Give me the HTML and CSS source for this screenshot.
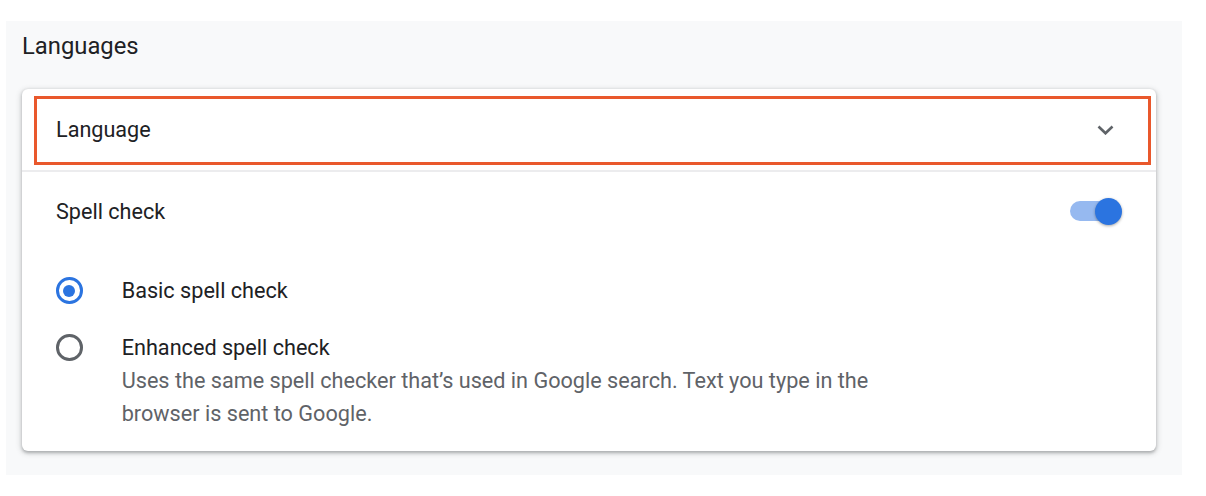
FILE: index.html
```html
<!DOCTYPE html>
<html lang="en">
<head>
<meta charset="utf-8">
<title>Languages</title>
<link rel="stylesheet" href="styles.css">
</head>
<body>
<section class="panel">
  <h2 class="panel-title">Languages</h2>
  <div class="card">
    <div class="row row-language">
      <span class="row-label">Language</span>
      <svg class="chevron" width="17" height="10" viewBox="0 0 17 10" aria-hidden="true">
        <path d="M1.5 1.5 L8.5 8.3 L15.5 1.5" fill="none" stroke="#5f6368" stroke-width="2.6"/>
      </svg>
    </div>
    <div class="row row-spell">
      <span class="row-label">Spell check</span>
      <span class="toggle toggle-on" role="switch" aria-checked="true">
        <span class="toggle-track"></span>
        <span class="toggle-knob"></span>
      </span>
    </div>
    <div class="radio-group">
      <div class="radio-row radio-row-basic">
        <span class="radio radio-checked"><span class="radio-dot"></span></span>
        <span class="radio-text">
          <span class="radio-label">Basic spell check</span>
        </span>
      </div>
      <div class="radio-row radio-row-enhanced">
        <span class="radio"></span>
        <span class="radio-text">
          <span class="radio-label">Enhanced spell check</span>
          <span class="radio-desc">Uses the same spell checker that’s used in Google search. Text you type in the browser is sent to Google.</span>
        </span>
      </div>
    </div>
  </div>
</section>
</body>
</html>
```
FILE: styles.css
```css
html, body {
  margin: 0;
  padding: 0;
  background: #ffffff;
}

body {
  font-family: Roboto, "Liberation Sans", Arial, sans-serif;
  color: #202124;
}

.panel {
  margin: 21px 0 0 6px;
  width: 1176px;
  box-sizing: border-box;
  background: #f8f9fa;
  padding: 9px 26px 24px 16px;
}

.panel-title {
  margin: 0;
  font-size: 23.8px;
  font-weight: 400;
  line-height: 33px;
  color: #202124;
}

.card {
  margin-top: 26px;
  background: #ffffff;
  border-radius: 6px;
  box-shadow: 0 1.5px 3px 0 rgba(60, 64, 67, 0.3), 0 1.5px 5px 1.5px rgba(60, 64, 67, 0.15);
}

.row {
  display: flex;
  align-items: center;
  justify-content: space-between;
  font-size: 21.6px;
  line-height: 33px;
}

.row-language {
  position: relative;
  height: 81px;
  padding: 0 42px 0 34px;
}

.row-language::after {
  content: "";
  position: absolute;
  left: 12px;
  top: 7px;
  right: 5px;
  bottom: 5px;
  border: 3px solid #e9582c;
  pointer-events: none;
}

.chevron {
  display: block;
}

.row-spell {
  height: 78px;
  padding: 0 34px;
  border-top: 2px solid #ececee;
}

.toggle {
  position: relative;
  display: block;
  width: 52px;
  height: 27px;
}

.toggle-track {
  position: absolute;
  left: 0;
  top: 3.6px;
  width: 46px;
  height: 19.8px;
  border-radius: 10px;
  background: #96b9f0;
}

.toggle-knob {
  position: absolute;
  right: 0;
  top: 0;
  width: 27px;
  height: 27px;
  border-radius: 50%;
  background: #2b74e0;
  box-shadow: 0 1px 3px rgba(0, 0, 0, 0.35);
}

.radio-group {
  padding: 12px 34px 21px 34px;
  font-size: 21.65px;
  line-height: 33px;
}

.radio-row {
  display: flex;
  gap: 39px;
}

.radio-row-basic {
  align-items: center;
  min-height: 57px;
}

.radio-row-enhanced {
  align-items: flex-start;
  padding-top: 12px;
}

.radio {
  flex: none;
  box-sizing: border-box;
  width: 26.7px;
  height: 26.7px;
  border-radius: 50%;
  border: 3.3px solid #5f6368;
  display: flex;
  align-items: center;
  justify-content: center;
}

.radio-row-enhanced .radio {
  margin-top: 3.2px;
}

.radio-checked {
  border-color: #2b74e0;
}

.radio-dot {
  width: 12px;
  height: 12px;
  border-radius: 50%;
  background: #2b74e0;
}

.radio-text {
  display: flex;
  flex-direction: column;
}

.radio-label {
  color: #202124;
}

.radio-desc {
  color: #5f6368;
  max-width: 790px;
}
```
